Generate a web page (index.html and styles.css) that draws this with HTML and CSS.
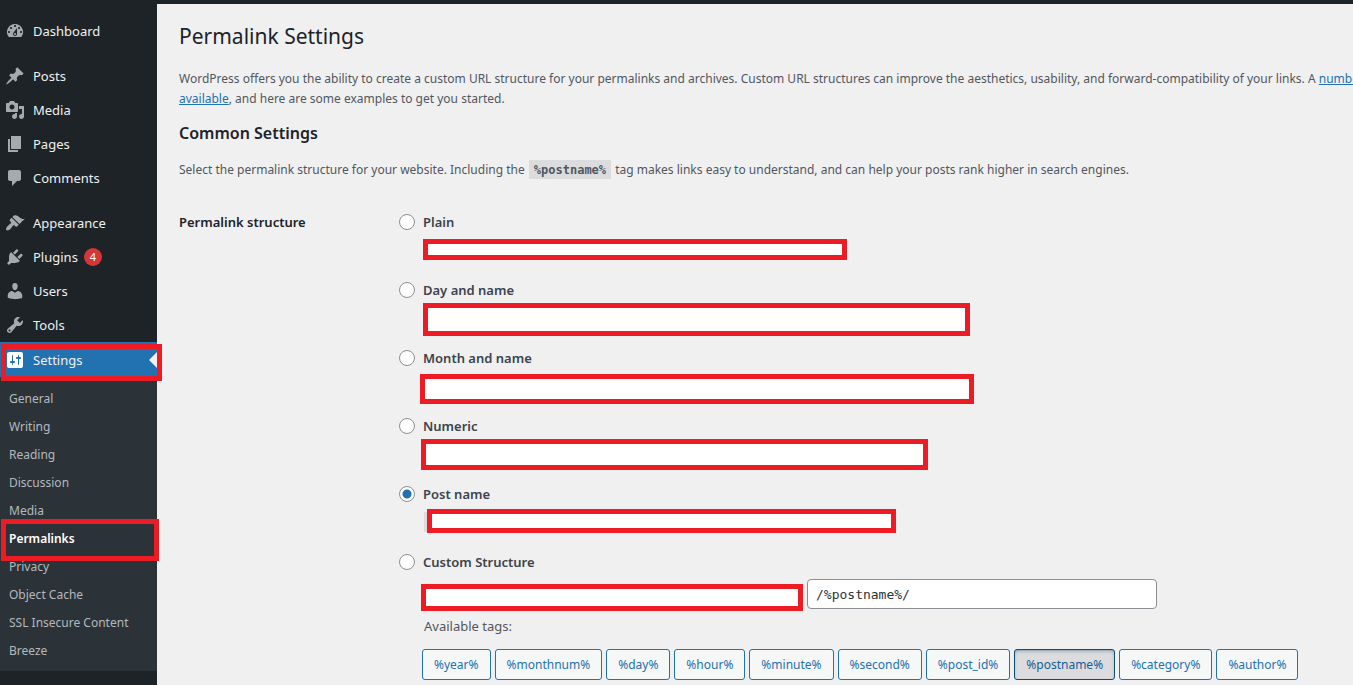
FILE: index.html
```html
<!DOCTYPE html>
<html lang="en">
<head>
    <meta charset="UTF-8">
    <meta name="viewport" content="width=device-width, initial-scale=1.0">
    <title>Permalink Settings</title>
    <link rel="stylesheet" href="styles.css">
</head>
<body>
    <div class="adminbar"></div>
    <div class="wrap">
        <nav class="sidebar">
            <ul class="menu">
                <li><a href="#" class="menu-item">
                    <svg class="icon" viewBox="0 0 20 20"><path fill-rule="evenodd" d="M3.76 16h12.48A7.998 7.998 0 0 0 10 3a7.998 7.998 0 0 0-6.24 13zM10 4c.55 0 1 .45 1 1s-.45 1-1 1-1-.45-1-1 .45-1 1-1zM6 6c.55 0 1 .45 1 1s-.45 1-1 1-1-.45-1-1 .45-1 1-1zm8 0c.55 0 1 .45 1 1s-.45 1-1 1-1-.45-1-1 .45-1 1-1zm-5.37 5.55L12 7v6c0 1.1-.9 2-2 2s-2-.9-2-2c0-.57.24-1.08.63-1.45zM4 10c.55 0 1 .45 1 1s-.45 1-1 1-1-.45-1-1 .45-1 1-1zm12 0c.55 0 1 .45 1 1s-.45 1-1 1-1-.45-1-1 .45-1 1-1zm-5 3c0-.55-.45-1-1-1s-1 .45-1 1 .45 1 1 1 1-.45 1-1z"/></svg>
                    Dashboard</a></li>
                <li class="separator"></li>
                <li><a href="#" class="menu-item">
                    <svg class="icon" viewBox="0 0 20 20"><path d="M10.44 3.02l1.82-1.82 6.36 6.35-1.83 1.82c-1.05-.68-2.48-.57-3.41.36l-.75.75c-.92.93-1.04 2.35-.35 3.41l-1.83 1.82-2.41-2.41-2.8 2.79c-.42.42-3.38 2.71-3.8 2.29s1.86-3.39 2.28-3.81l2.79-2.79L4.1 9.36l1.83-1.82c1.05.69 2.48.57 3.4-.36l.75-.75c.93-.92 1.05-2.35.36-3.41z"/></svg>
                    Posts</a></li>
                <li><a href="#" class="menu-item">
                    <svg class="icon" viewBox="0 0 20 20"><path fill-rule="evenodd" d="M13 11V4c0-.55-.45-1-1-1h-1.67L9 1H5L3.67 3H2c-.55 0-1 .45-1 1v7c0 .55.45 1 1 1h10c.55 0 1-.45 1-1zM7 4.5c1.38 0 2.5 1.12 2.5 2.5S8.38 9.5 7 9.5 4.5 8.38 4.5 7 5.62 4.5 7 4.5zM14 6h5v10.5c0 1.38-1.12 2.5-2.5 2.5S14 17.88 14 16.5s1.12-2.5 2.5-2.5c.17 0 .34.02.5.05V9h-3V6zm-4 8.05V13h2v3.5c0 1.38-1.12 2.5-2.5 2.5S7 17.88 7 16.5 8.12 14 9.5 14c.17 0 .34.02.5.05z"/></svg>
                    Media</a></li>
                <li><a href="#" class="menu-item">
                    <svg class="icon" viewBox="0 0 20 20"><path d="M6 15V2h10v13H6zm-1 1h8v2H3V5h2v11z"/></svg>
                    Pages</a></li>
                <li><a href="#" class="menu-item">
                    <svg class="icon" viewBox="0 0 20 20"><path d="M5 2h9c1.1 0 2 .9 2 2v7c0 1.1-.9 2-2 2h-2l-5 5v-5H5c-1.1 0-2-.9-2-2V4c0-1.1.9-2 2-2z"/></svg>
                    Comments</a></li>
                <li class="separator"></li>
                <li><a href="#" class="menu-item">
                    <svg class="icon" viewBox="0 0 20 20"><path d="M14.48 11.06L7.41 3.99l1.5-1.5c.5-.56 2.3-.47 3.51.32 1.21.8 1.43 1.28 2.91 2.1 1.18.64 2.45 1.26 4.45.85zm-.71.71L6.7 4.7 4.93 6.47c-.39.39-.39 1.02 0 1.41l1.06 1.06c.39.39.39 1.03 0 1.42-.6.6-1.43 1.11-2.21 1.69-.35.26-.7.53-1.01.84C1.43 14.23.4 16.08 1.4 17.07c.99 1 2.84-.03 4.18-1.36.31-.31.58-.66.85-1.02.57-.78 1.08-1.61 1.69-2.21.39-.39 1.02-.39 1.41 0l1.06 1.06c.39.39 1.02.39 1.41 0z"/></svg>
                    Appearance</a></li>
                <li><a href="#" class="menu-item">
                    <svg class="icon" viewBox="0 0 20 20"><path d="M13.11 4.36L9.87 7.6 8 5.73l3.24-3.24c.35-.34 1.05-.2 1.56.32.52.51.66 1.21.31 1.55zm-8 1.77l.91-1.12 9.01 9.01-1.19.84c-.71.71-2.63 1.16-3.82 1.16H6.14L4.9 17.26c-.59.59-1.54.59-2.12 0-.59-.58-.59-1.53 0-2.12l1.24-1.24v-3.88c0-1.13.4-3.19 1.09-3.89zm7.26 3.97l3.24-3.24c.34-.35 1.04-.21 1.55.31.52.51.66 1.21.31 1.55l-3.24 3.25z"/></svg>
                    Plugins <span class="count">4</span></a></li>
                <li><a href="#" class="menu-item">
                    <svg class="icon" viewBox="0 0 20 20"><path d="M10 9.25c-2.27 0-2.73-3.44-2.73-3.44C7 4.02 7.82 2 9.97 2c2.16 0 2.98 2.02 2.71 3.81 0 0-.41 3.44-2.68 3.44zm0 2.57L12.72 10c2.39 0 4.52 2.33 4.52 4.53v2.49s-3.65 1.13-7.24 1.13c-3.65 0-7.24-1.13-7.24-1.13v-2.49c0-2.25 1.94-4.48 4.47-4.48z"/></svg>
                    Users</a></li>
                <li><a href="#" class="menu-item">
                    <svg class="icon" viewBox="0 0 20 20"><path fill-rule="evenodd" d="M16.68 9.77c-1.34 1.34-3.3 1.67-4.95.99l-5.41 6.52c-.99.99-2.59.99-3.58 0s-.99-2.59 0-3.57l6.52-5.42c-.68-1.65-.35-3.61.99-4.95 1.28-1.28 3.12-1.62 4.72-1.06l-2.89 2.89 2.82 2.82 2.86-2.87c.53 1.58.18 3.39-1.08 4.65zM3.81 16.21c.4.39 1.04.39 1.43 0 .4-.4.4-1.04 0-1.43-.39-.4-1.03-.4-1.43 0-.39.39-.39 1.03 0 1.43z"/></svg>
                    Tools</a></li>
                <li class="current">
                    <a href="#" class="menu-item">
                    <svg class="icon" viewBox="0 0 20 20"><path fill-rule="evenodd" d="M18 16V4c0-1.1-.9-2-2-2H4c-1.1 0-2 .9-2 2v12c0 1.1.9 2 2 2h12c1.1 0 2-.9 2-2zM8 11h1c.55 0 1 .45 1 1s-.45 1-1 1H8v1.5c0 .28-.22.5-.5.5s-.5-.22-.5-.5V13H6c-.55 0-1-.45-1-1s.45-1 1-1h1V5.5c0-.28.22-.5.5-.5s.5.22.5.5V11zm5-2h-1c-.55 0-1-.45-1-1s.45-1 1-1h1V5.5c0-.28.22-.5.5-.5s.5.22.5.5V7h1c.55 0 1 .45 1 1s-.45 1-1 1h-1v5.5c0 .28-.22.5-.5.5s-.5-.22-.5-.5V9z"/></svg>
                    Settings</a>
                    <span class="mark mark-settings"></span>
                </li>
            </ul>
            <ul class="submenu">
                <li><a href="#">General</a></li>
                <li><a href="#">Writing</a></li>
                <li><a href="#">Reading</a></li>
                <li><a href="#">Discussion</a></li>
                <li><a href="#">Media</a></li>
                <li class="active"><a href="#">Permalinks</a><span class="mark mark-permalinks"></span></li>
                <li><a href="#">Privacy</a></li>
                <li><a href="#">Object Cache</a></li>
                <li><a href="#">SSL Insecure Content</a></li>
                <li><a href="#">Breeze</a></li>
            </ul>
        </nav>

        <main class="content">
            <h1>Permalink Settings</h1>
            <p>WordPress offers you the ability to create a custom URL structure for your permalinks and archives. Custom URL structures can improve the aesthetics, usability, and forward-compatibility of your links. A <a href="#">number of tags are<br>available</a>, and here are some examples to get you started.</p>
            <h2>Common Settings</h2>
            <p>Select the permalink structure for your website. Including the <code>%postname%</code> tag makes links easy to understand, and can help your posts rank higher in search engines.</p>

            <form class="form-row">
                <h3>Permalink structure</h3>
                <div class="options">
                    <div class="option">
                        <input type="radio" name="structure" id="plain">
                        <label for="plain">Plain</label>
                        <span class="mark mark-plain"></span>
                    </div>
                    <div class="option">
                        <input type="radio" name="structure" id="day-name">
                        <label for="day-name">Day and name</label>
                        <span class="mark mark-day"></span>
                    </div>
                    <div class="option">
                        <input type="radio" name="structure" id="month-name">
                        <label for="month-name">Month and name</label>
                        <span class="mark mark-month"></span>
                    </div>
                    <div class="option">
                        <input type="radio" name="structure" id="numeric">
                        <label for="numeric">Numeric</label>
                        <span class="mark mark-numeric"></span>
                    </div>
                    <div class="option">
                        <input type="radio" name="structure" id="post-name" checked>
                        <label for="post-name">Post name</label>
                        <code class="sample"></code>
                        <span class="mark mark-post"></span>
                    </div>
                    <div class="option">
                        <input type="radio" name="structure" id="custom">
                        <label for="custom">Custom Structure</label>
                        <div class="custom">
                            <input type="text" class="structure" aria-label="Custom structure" value="/%postname%/">
                            <p class="tags-title">Available tags:</p>
                            <div class="tags">
                                <button type="button">%year%</button>
                                <button type="button">%monthnum%</button>
                                <button type="button">%day%</button>
                                <button type="button">%hour%</button>
                                <button type="button">%minute%</button>
                                <button type="button">%second%</button>
                                <button type="button">%post_id%</button>
                                <button type="button" class="pressed">%postname%</button>
                                <button type="button">%category%</button>
                                <button type="button">%author%</button>
                            </div>
                        </div>
                        <span class="mark mark-custom"></span>
                    </div>
                </div>
            </form>
        </main>
    </div>
</body>
</html>
```
FILE: styles.css
```css
* {
    box-sizing: border-box;
}
body {
    margin: 0;
    height: 100vh;
    display: flex;
    flex-direction: column;
    overflow: hidden;
    background: #f0f0f1;
    color: #50575e;
    font-family: "Segoe UI", "Noto Sans", sans-serif;
    font-size: 12px;
    line-height: 20px;
}
h1, h2, h3, p, ul {
    margin: 0;
    padding: 0;
}
ul {
    list-style: none;
}
a {
    color: #2271b1;
}
.adminbar {
    height: 4px;
    flex-shrink: 0;
    background: #1d2327;
}
.wrap {
    flex: 1;
    display: flex;
}

/* Sidebar */
.sidebar {
    width: 157px;
    flex-shrink: 0;
    background: #1d2327;
    padding-top: 10px;
}
.menu-item {
    display: flex;
    align-items: center;
    height: 34px;
    padding-left: 5px;
    color: #f0f0f1;
    font-size: 13px;
    text-decoration: none;
}
.icon {
    width: 20px;
    height: 20px;
    margin-right: 8px;
    fill: #a7aaad;
}
.separator {
    height: 11px;
}
.count {
    width: 18px;
    height: 18px;
    margin-left: 6px;
    border-radius: 9px;
    background: #d63638;
    color: #fff;
    font-size: 11px;
    line-height: 18px;
    text-align: center;
}
.current {
    position: relative;
    background: #2271b1;
}
.current .menu-item {
    height: 35px;
}
.current .icon {
    fill: #fff;
}
.current::after {
    content: "";
    position: absolute;
    top: 10px;
    right: 0;
    border: 8px solid transparent;
    border-right-color: #f0f0f1;
    border-left: 0;
}
.submenu {
    padding: 8px 0 6px;
    background: #2c3338;
}
.submenu li {
    position: relative;
    height: 28px;
    padding-left: 9px;
    line-height: 28px;
}
.submenu a {
    color: #b4b9be;
    text-decoration: none;
}
.submenu .active a {
    color: #fff;
    font-weight: 600;
}

/* Content */
.content {
    flex: 1;
    min-width: 0;
    padding: 17px 0 0 22px;
    white-space: nowrap;
}
h1 {
    color: #1d2327;
    font-size: 21px;
    font-weight: 400;
    line-height: 30px;
    margin-bottom: 18px;
}
h2 {
    color: #1d2327;
    font-size: 16px;
    font-weight: 600;
    line-height: 24px;
    margin: 12px 0 15px;
}
h3 {
    width: 220px;
    flex-shrink: 0;
    color: #1d2327;
    font-size: 13px;
    font-weight: 600;
    line-height: 20px;
}
code {
    padding: 3px 5px 2px;
    margin: 0 1px;
    background: #dcdcde;
    font-family: Consolas, "DejaVu Sans Mono", monospace;
    font-size: 12px;
    font-weight: 600;
}
.form-row {
    display: flex;
    margin-top: 32px;
}
.options {
    flex: 1;
}
.option {
    position: relative;
    min-height: 68px;
}
.option label {
    color: #3c434a;
    font-size: 13px;
    font-weight: 600;
}
input[type="radio"] {
    appearance: none;
    float: left;
    width: 16px;
    height: 16px;
    margin: 2px 8px 0 0;
    border: 1px solid #8c8f94;
    border-radius: 50%;
    background: #fff;
}
input[type="radio"]:checked {
    background: radial-gradient(circle, #2271b1 4px, #fff 5px);
}
.sample {
    display: block;
    width: 400px;
    height: 20px;
    margin: 7px 0 0 25px;
}
.custom {
    padding: 6px 0 0 23px;
}
.structure {
    display: block;
    width: 350px;
    height: 30px;
    margin-left: 385px;
    padding: 0 8px;
    border: 1px solid #8c8f94;
    border-radius: 4px;
    background: #fff;
    color: #2c3338;
    font-family: Consolas, "DejaVu Sans Mono", monospace;
    font-size: 13px;
}
.tags-title {
    margin: 7px 0 13px 2px;
    font-size: 13px;
}
.tags {
    display: flex;
    gap: 4px;
}
button {
    height: 31px;
    padding: 0 11px;
    border: 1px solid #2271b1;
    border-radius: 3px;
    background: #f6f7f7;
    color: #2271b1;
    font-family: inherit;
    font-size: 12px;
}
button.pressed {
    background: #dcdcde;
    border-color: #0a4b78;
    color: #135e96;
    box-shadow: inset 0 2px 5px -3px #0a4b78;
}

/* Red annotation boxes drawn over the screen */
.mark {
    position: absolute;
    border: 5px solid #ed1c24;
    background: #fff;
    z-index: 1;
}
.mark-settings {
    top: 2px;
    left: 1px;
    width: 161px;
    height: 37px;
    background: none;
}
.mark-permalinks {
    top: -6px;
    left: 1px;
    width: 158px;
    height: 42px;
    background: none;
}
.mark-plain {
    top: 27px;
    left: 24px;
    width: 424px;
    height: 21px;
}
.mark-day {
    top: 23px;
    left: 24px;
    width: 547px;
    height: 33px;
}
.mark-month {
    top: 26px;
    left: 21px;
    width: 554px;
    height: 30px;
}
.mark-numeric {
    top: 23px;
    left: 22px;
    width: 507px;
    height: 31px;
}
.mark-post {
    top: 25px;
    left: 28px;
    width: 469px;
    height: 24px;
}
.mark-custom {
    top: 32px;
    left: 22px;
    width: 382px;
    height: 27px;
}
```
